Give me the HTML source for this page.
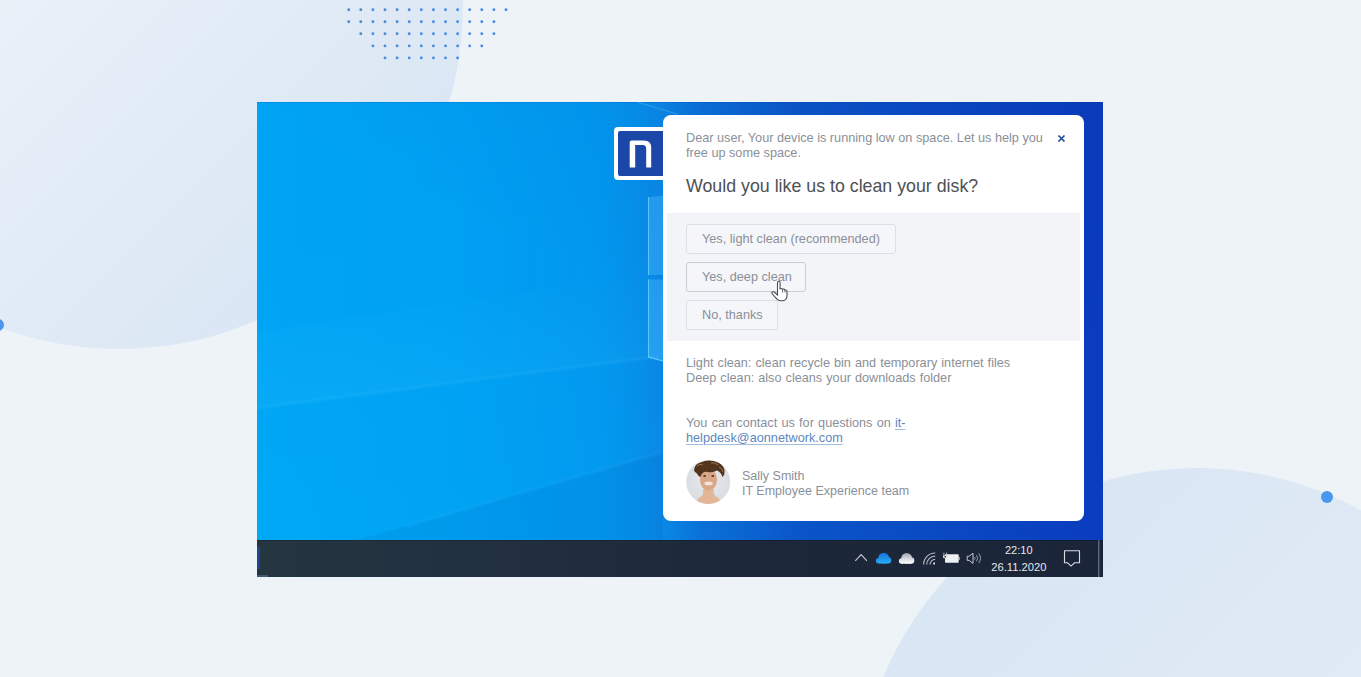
<!DOCTYPE html>
<html><head><meta charset="utf-8">
<style>
*{margin:0;padding:0;box-sizing:border-box}
html,body{width:1361px;height:677px;overflow:hidden}
body{position:relative;background:#eef3f8;font-family:"Liberation Sans",sans-serif}
.abs{position:absolute}
#c1{left:-224px;top:-338px;width:687px;height:687px;border-radius:50%;background:linear-gradient(135deg,#eaf1f9 40%,#dbe7f4 80%)}
#c2{left:857px;top:468px;width:680px;height:680px;border-radius:50%;background:linear-gradient(135deg,#d9e6f4 15%,#e4ecf6 70%)}
.bd{position:absolute;width:12px;height:12px;border-radius:50%;background:#4a97ef}
#desk{left:257px;top:102px;width:846px;height:475px;overflow:hidden;background:#0a8fe6}
#wall{left:0;top:0;width:846px;height:438px;background:linear-gradient(90deg,#00a4f4 0px,#00a0f3 200px,#0298ef 343px,#068fe9 383px,#0a86e4 406px,#0a70d8 443px,#0a55c8 543px,#0a44c0 743px,#0a3cbf 846px)}
#task{left:0;top:438px;width:846px;height:37px;background:linear-gradient(90deg,#243640 0%,#212f40 30%,#1c2839 60%,#1b2539 100%)}
#logo{left:357px;top:24.5px;width:60px;height:53px;background:#fff;border-radius:4px}
#logo .in{left:4px;top:4px;width:60px;height:45px;background:#1a47a8;border-radius:2px}
#dlg{left:406px;top:13px;width:421px;height:405.5px;background:#fff;border-radius:8px;overflow:hidden}
.t{position:absolute;white-space:nowrap;color:#8a8f99;font-size:12.7px;line-height:15px}
#grey{left:4px;top:98px;width:413px;height:128px;background:#f3f4f8}
.btn{position:absolute;left:23px;height:30px;border:1px solid #dcdfe5;border-radius:3px;background:#f5f6f9;color:#8a8f99;font-size:12.7px;line-height:28px;padding-left:15px;white-space:nowrap}
.tt{position:absolute;color:#e6e9ee;font-size:11px;white-space:nowrap;line-height:12px}
</style></head><body>
<div id="c1" class="abs"></div>
<div id="c2" class="abs"></div>
<svg class="abs" style="left:0;top:0" width="1361" height="80"><g fill="#4a8ce0"><circle cx="348.7" cy="9.8" r="1.45"/><circle cx="360.8" cy="9.8" r="1.45"/><circle cx="372.9" cy="9.8" r="1.45"/><circle cx="385.0" cy="9.8" r="1.45"/><circle cx="397.1" cy="9.8" r="1.45"/><circle cx="409.2" cy="9.8" r="1.45"/><circle cx="421.3" cy="9.8" r="1.45"/><circle cx="433.4" cy="9.8" r="1.45"/><circle cx="445.5" cy="9.8" r="1.45"/><circle cx="457.6" cy="9.8" r="1.45"/><circle cx="469.7" cy="9.8" r="1.45"/><circle cx="481.8" cy="9.8" r="1.45"/><circle cx="493.9" cy="9.8" r="1.45"/><circle cx="506.0" cy="9.8" r="1.45"/><circle cx="348.7" cy="21.8" r="1.45"/><circle cx="360.8" cy="21.8" r="1.45"/><circle cx="372.9" cy="21.8" r="1.45"/><circle cx="385.0" cy="21.8" r="1.45"/><circle cx="397.1" cy="21.8" r="1.45"/><circle cx="409.2" cy="21.8" r="1.45"/><circle cx="421.3" cy="21.8" r="1.45"/><circle cx="433.4" cy="21.8" r="1.45"/><circle cx="445.5" cy="21.8" r="1.45"/><circle cx="457.6" cy="21.8" r="1.45"/><circle cx="469.7" cy="21.8" r="1.45"/><circle cx="481.8" cy="21.8" r="1.45"/><circle cx="493.9" cy="21.8" r="1.45"/><circle cx="360.8" cy="33.8" r="1.45"/><circle cx="372.9" cy="33.8" r="1.45"/><circle cx="385.0" cy="33.8" r="1.45"/><circle cx="397.1" cy="33.8" r="1.45"/><circle cx="409.2" cy="33.8" r="1.45"/><circle cx="421.3" cy="33.8" r="1.45"/><circle cx="433.4" cy="33.8" r="1.45"/><circle cx="445.5" cy="33.8" r="1.45"/><circle cx="457.6" cy="33.8" r="1.45"/><circle cx="469.7" cy="33.8" r="1.45"/><circle cx="481.8" cy="33.8" r="1.45"/><circle cx="493.9" cy="33.8" r="1.45"/><circle cx="372.9" cy="45.9" r="1.45"/><circle cx="385.0" cy="45.9" r="1.45"/><circle cx="397.1" cy="45.9" r="1.45"/><circle cx="409.2" cy="45.9" r="1.45"/><circle cx="421.3" cy="45.9" r="1.45"/><circle cx="433.4" cy="45.9" r="1.45"/><circle cx="445.5" cy="45.9" r="1.45"/><circle cx="457.6" cy="45.9" r="1.45"/><circle cx="469.7" cy="45.9" r="1.45"/><circle cx="481.8" cy="45.9" r="1.45"/><circle cx="385.0" cy="57.9" r="1.45"/><circle cx="397.1" cy="57.9" r="1.45"/><circle cx="409.2" cy="57.9" r="1.45"/><circle cx="421.3" cy="57.9" r="1.45"/><circle cx="433.4" cy="57.9" r="1.45"/><circle cx="445.5" cy="57.9" r="1.45"/><circle cx="457.6" cy="57.9" r="1.45"/></g></svg>
<div class="bd" style="left:-8px;top:318.5px"></div>
<div class="bd" style="left:1321px;top:490.5px"></div>

<div id="desk" class="abs">
  <div id="wall" class="abs"></div><div class="abs" style="left:0;top:0;width:846px;height:438px;background:radial-gradient(ellipse 520px 300px at 0% 100%,rgba(0,190,255,0.18),rgba(0,190,255,0) 100%),linear-gradient(205deg,rgba(0,40,150,0.10) 0%,rgba(0,40,150,0) 50%)"></div><div class="abs" style="left:0;top:0;width:846px;height:1px;background:rgba(0,60,160,0.18)"></div>
  <svg class="abs" style="left:0;top:0" width="846" height="438">
    <defs><linearGradient id="bm" x1="0" y1="0" x2="0" y2="1"><stop offset="0" stop-color="#40c8ff" stop-opacity="0"/><stop offset="1" stop-color="#40c8ff" stop-opacity="0.12"/></linearGradient></defs>
    <polygon points="0,230 406,170 406,254 0,306" fill="url(#bm)"/>
    <filter id="bl"><feGaussianBlur stdDeviation="1.2"/></filter><line x1="0" y1="306" x2="406" y2="254" stroke="#7fdcff" stroke-width="2.5" opacity="0.10" filter="url(#bl)"/>
    <polygon points="150,424 406,350 406,438 100,438" fill="#0040a0" opacity="0.09"/><line x1="150" y1="424" x2="406" y2="350" stroke="#7fdcff" stroke-width="2" opacity="0.1" filter="url(#bl)"/>
    <line x1="380" y1="0" x2="420" y2="12" stroke="#6fd4ff" stroke-width="1.2" opacity="0.3"/>
    <polygon points="391,95.4 406,93.4 406,173 391,173" fill="#4ab8ff" opacity="0.4"/>
    <polygon points="391,177.6 406,177.6 406,259 391,254.8" fill="#4ab8ff" opacity="0.4"/>
    <line x1="391.5" y1="95" x2="391.5" y2="173" stroke="#80e4ff" stroke-width="1" opacity="0.6"/>
    <line x1="391.5" y1="177.5" x2="391.5" y2="255" stroke="#80e4ff" stroke-width="1" opacity="0.6"/><line x1="391" y1="254.8" x2="406" y2="259" stroke="#80e4ff" stroke-width="1.2" opacity="0.7"/>
  </svg>
  <div id="logo" class="abs"><div class="in abs"></div>
    <svg class="abs" style="left:0;top:0" width="60" height="53"><path d="M15.7 40.4 V15.2 Q15.7 13.4 17.5 13.4 H30 Q37.2 13.4 37.2 20.6 V40.4 H32.2 V21.5 Q32.2 18 28.7 18 H21.2 V40.4 Z" fill="#fff"/></svg>
  </div>
  <div id="task" class="abs">
    <div class="abs" style="left:0;top:7px;width:3.3px;height:22px;background:#1b49a6;opacity:0.85"></div>
    <div class="abs" style="left:0;top:35px;width:11px;height:1.5px;background:#4d6c82;opacity:0.7"></div><div class="abs" style="left:0;top:0;width:846px;height:1px;background:rgba(0,10,30,0.25)"></div>
    <svg class="abs" style="left:0;top:0" width="846" height="37">
      <defs>
        <linearGradient id="cb" gradientUnits="userSpaceOnUse" x1="0" y1="0" x2="0" y2="10.8"><stop offset="0" stop-color="#1474dc"/><stop offset="1" stop-color="#2aa9f2"/></linearGradient>
        <linearGradient id="cw" gradientUnits="userSpaceOnUse" x1="0" y1="0" x2="0" y2="10.8"><stop offset="0" stop-color="#9da3ab"/><stop offset="0.55" stop-color="#d9dce0"/><stop offset="1" stop-color="#ffffff"/></linearGradient>
      </defs>
      <polyline points="598.3,20.9 604.1,14.6 609.9,20.9" fill="none" stroke="#c8ccd4" stroke-width="1.1"/>
      <g transform="translate(618.8,12.7)" fill="url(#cb)"><circle cx="2.8" cy="8.1" r="2.7"/><circle cx="7.9" cy="5.4" r="5.4"/><circle cx="12.3" cy="7.6" r="3.2"/><rect x="2.8" y="7" width="9.5" height="3.8"/></g>
      <g transform="translate(641.8,12.9)" fill="url(#cw)"><circle cx="2.8" cy="8.1" r="2.7"/><circle cx="7.9" cy="5.4" r="5.4"/><circle cx="12.3" cy="7.6" r="3.2"/><rect x="2.8" y="7" width="9.5" height="3.8"/></g>
      <g fill="none" stroke="#b3b9c3" stroke-width="1.2"><path d="M666.6 24.6 A11.6 11.6 0 0 1 678.2 13"/><path d="M669.7 24.6 A8.5 8.5 0 0 1 678.2 16.1"/><path d="M673 24.6 A5.2 5.2 0 0 1 678.2 19.4"/></g>
      <rect x="676.2" y="22.6" width="1.8" height="1.8" fill="#e8eaee"/>
      <rect x="688" y="14.3" width="13.7" height="8.4" rx="0.8" fill="#eef0f3"/>
      <rect x="701.5" y="16.8" width="1.2" height="3.2" fill="#c9cdd3"/>
      <path d="M686.9 12.7 V15.6 M689.6 12.7 V15.6" stroke="#c9cdd3" stroke-width="0.9" fill="none"/>
      <rect x="686" y="15.3" width="4.4" height="2.9" rx="0.8" fill="#d5d8dd"/>
      <circle cx="688.2" cy="16.7" r="0.8" fill="#1b2539"/>
      <path d="M710.2 16.2 H712.2 L716 13.2 V23.5 L712.2 20.4 H710.2 Z" fill="none" stroke="#c3c8cf" stroke-width="1"/>
      <path d="M717.6 17 Q718.6 18.3 717.6 19.6 M719.6 15.3 Q721.6 18.3 719.6 21.3 M721.8 13.5 Q725.2 18.3 721.8 23.1" fill="none" stroke="#a4abb5" stroke-width="0.9"/>
      <path d="M807.5 10.8 H822.5 V22.8 H817.5 L814 26.1 L810.5 22.8 H807.5 Z" fill="none" stroke="#d9dce2" stroke-width="1.1"/>
      <line x1="841.8" y1="0" x2="841.8" y2="37" stroke="#7d8796" stroke-width="1"/>
    </svg>
    <div class="tt" style="left:748px;top:4px">22:10</div>
    <div class="tt" style="left:734.3px;top:21px;font-size:11.2px">26.11.2020</div>
  </div>
  <div id="dlg" class="abs">
    <div class="t" style="left:23px;top:16px">Dear user, Your device is running low on space. Let us help you<br>free up some space.</div>
    <svg class="abs" style="left:393px;top:17.8px" width="12" height="12"><path d="M2.5 2.5 L8.5 8.5 M8.5 2.5 L2.5 8.5" stroke="#214d98" stroke-width="1.7"/></svg>
    <div class="t" style="left:23px;top:61px;font-size:17.8px;line-height:20px;color:#4d5055">Would you like us to clean your disk?</div>
    <div id="grey" class="abs"></div>
    <div class="btn" style="top:109px;width:210px">Yes, light clean (recommended)</div>
    <div class="btn" style="top:147px;width:120px;border-color:#c9ccd2">Yes, deep clean</div>
    <div class="btn" style="top:185px;width:92px">No, thanks</div>
    <svg class="abs" style="left:107px;top:165px" width="20" height="22"><path d="M7.5 2.8 Q7.5 1.3 8.8 1.3 Q10.1 1.3 10.1 2.8 V8.8 Q11.8 8 12.6 9.2 Q14.3 8.6 15 10 Q16.8 9.6 17 11.5 V15.5 Q17 19.8 13 20.8 H10.5 Q8.2 20.8 6.5 18.6 L2.3 14 Q1.4 12.8 2.5 12 Q3.6 11.3 4.8 12.5 L7.5 15 Z" fill="#fff" stroke="#4a4d52" stroke-width="1.1"/><path d="M12.6 9.2 V12.5 M15 10 V12.5" stroke="#4a4d52" stroke-width="0.9"/></svg>
    <div class="t" style="left:23px;top:241px;word-spacing:0.5px">Light clean: clean recycle bin and temporary internet files<br>Deep clean: also cleans your downloads folder</div>
    <div class="t" style="left:23px;top:301px;word-spacing:0.7px">You can contact us for questions on <u style="color:#6086bb;text-decoration-color:#a0bde2;text-underline-offset:1.5px">it-</u><br><u style="color:#6086bb;text-decoration-color:#a0bde2;text-underline-offset:1.5px">helpdesk@aonnetwork.com</u></div>
    <svg class="abs" style="left:23px;top:345px" width="45" height="45" viewBox="0 0 45 45">
      <defs><clipPath id="ac"><circle cx="22.2" cy="22" r="22"/></clipPath>
      <radialGradient id="ag" cx="0.5" cy="0.45" r="0.6"><stop offset="0" stop-color="#e8eaed"/><stop offset="0.8" stop-color="#dadde2"/><stop offset="1" stop-color="#e4e7ec"/></radialGradient>
      <filter id="af"><feGaussianBlur stdDeviation="0.45"/></filter></defs>
      <g clip-path="url(#ac)">
        <rect width="45" height="45" fill="url(#ag)"/>
        <g filter="url(#af)">
        <path d="M9 45 Q11 38 16 36 Q18 33 17 29 L28 29 Q27 33 29 36 Q34 38 36 45 Z" fill="#e2b697"/>
        <ellipse cx="22.5" cy="19.5" rx="8.6" ry="11" fill="#d9a787"/>
        <path d="M8 10 Q9 3 16 2 Q22 -0.5 30 1.5 Q37 3.5 38.5 10 Q39 15 36.5 17 Q35 12 31 10.5 Q27 13 22 12 Q16 11 14.5 17 Q12 16 10.5 13 Q8.5 12.5 8 10 Z" fill="#53361f"/>
        <path d="M11 6 Q14 3 17 5 M25 3 Q29 2 32 5 M33 7 Q36 8 37 12" stroke="#9b7452" stroke-width="1" fill="none"/>
        <ellipse cx="18.6" cy="16" rx="1.5" ry="0.9" fill="#5e3d2b"/>
        <ellipse cx="26.8" cy="16" rx="1.5" ry="0.9" fill="#5e3d2b"/>
        <ellipse cx="22.6" cy="23.5" rx="4.2" ry="1.9" fill="#f3e3de"/>
        </g>
      </g>
    </svg>
    <div class="t" style="left:79px;top:354px;font-size:12.5px">Sally Smith<br>IT Employee Experience team</div>
  </div>
</div>
</body></html>
